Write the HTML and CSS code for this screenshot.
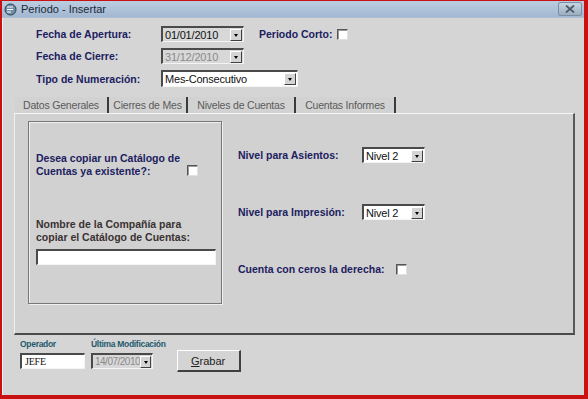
FILE: index.html
```html
<!DOCTYPE html>
<html lang="es">
<head>
<meta charset="utf-8">
<title>Periodo - Insertar</title>
<link rel="stylesheet" href="styles.css">
</head>
<body>
<div class="window">
  <div class="titlebar">
    <span class="app-icon">
      <svg width="13" height="13" viewBox="0 0 13 13">
        <circle cx="6.5" cy="6.5" r="5.5" fill="#6f8fa8" stroke="#2a3a4a" stroke-width="1"/>
        <path d="M3 4 h6 M3 6.5 h6 M3 9 h4" stroke="#fff" stroke-width="1.2"/>
      </svg>
    </span>
    <span class="title">Periodo - Insertar</span>
    <span class="close-btn">
      <svg width="10" height="8" viewBox="0 0 10 8"><path d="M1 0.5 L9 7.5 M9 0.5 L1 7.5" stroke="#4a5a6a" stroke-width="1.8"/></svg>
    </span>
  </div>

  <div class="body">
    <div class="top-form">
      <label class="lbl">Fecha de Apertura:</label>
      <div class="row-controls">
        <div class="field date"><span class="val">01/01/2010</span><span class="dd"></span></div>
        <label class="lbl corto">Periodo Corto:</label>
        <span class="check"></span>
      </div>
      <label class="lbl">Fecha de Cierre:</label>
      <div class="row-controls">
        <div class="field date disabled"><span class="val">31/12/2010</span><span class="dd"></span></div>
      </div>
      <label class="lbl">Tipo de Numeración:</label>
      <div class="row-controls">
        <div class="field combo white"><span class="val">Mes-Consecutivo</span><span class="dd"></span></div>
      </div>
    </div>

    <div class="tabs">
      <span class="tab t1">Datos Generales</span>
      <span class="tab t2">Cierres de Mes</span>
      <span class="tab t3">Niveles de Cuentas</span>
      <span class="tab t4">Cuentas Informes</span>
    </div>

    <div class="panel">
      <div class="group">
        <div class="copy-row">
          <span class="lbl multi copy-lbl">Desea copiar un Catálogo de<br>Cuentas ya existente?:</span>
          <span class="check"></span>
        </div>
        <div class="lbl multi dark">Nombre de la Compañía para<br>copiar el Catálogo de Cuentas:</div>
        <div class="field text white"></div>
      </div>
      <div class="right-col">
        <div class="r-row">
          <span class="lbl r-lbl">Nivel para Asientos:</span>
          <div class="field nivel white"><span class="val">Nivel 2</span><span class="dd"></span></div>
        </div>
        <div class="r-row">
          <span class="lbl r-lbl">Nivel para Impresión:</span>
          <div class="field nivel white"><span class="val">Nivel 2</span><span class="dd"></span></div>
        </div>
        <div class="r-row">
          <span class="lbl">Cuenta con ceros la derecha:</span>
          <span class="check ceros"></span>
        </div>
      </div>
    </div>

    <div class="footer">
      <div class="f-col">
        <span class="small-lbl">Operador</span>
        <div class="field oper white"><span class="val serif">JEFE</span></div>
      </div>
      <div class="f-col">
        <span class="small-lbl">Última Modificación</span>
        <div class="field umod disabled"><span class="val">14/07/2010</span><span class="dd"></span></div>
      </div>
      <button class="btn"><u>G</u>rabar</button>
    </div>
  </div>
</div>
</body>
</html>
```

FILE: styles.css
```css
html, body {
  margin: 0;
  padding: 0;
  width: 588px;
  height: 399px;
  overflow: hidden;
  background: #c41414;
}

.window {
  box-sizing: border-box;
  width: 588px;
  height: 399px;
  border-style: solid;
  border-color: #c81212;
  border-width: 1px 4px 4px 2px;
  background: #d5d5d5;
  display: flex;
  flex-direction: column;
  font-family: "Liberation Sans", Arial, sans-serif;
}

.titlebar {
  height: 16px;
  display: flex;
  align-items: center;
  background: linear-gradient(to bottom, #bccde0, #a2b8d2);
  border-bottom: 1px solid #b0c0d0;
  padding-left: 2px;
}

.app-icon {
  width: 14px;
  height: 14px;
  display: flex;
  align-items: center;
}

.title {
  margin-left: 3px;
  font-size: 11px;
  color: #1c2836;
  flex: 1;
}

.close-btn {
  width: 22px;
  height: 12px;
  margin-right: 2px;
  border: 1px solid #7a8ea4;
  border-radius: 2px;
  background: linear-gradient(to bottom, #c8d4e0, #9cadc0);
  display: flex;
  align-items: center;
  justify-content: center;
}

.body {
  flex: 1;
  display: flex;
  flex-direction: column;
  padding: 8px 4px 0 12px;
  box-shadow: inset 1px 0 0 #f2f2f2;
}

.lbl {
  font-size: 10.5px;
  font-weight: bold;
  color: #202060;
  white-space: nowrap;
}

.top-form {
  display: grid;
  grid-template-columns: 125px auto;
  grid-template-rows: 16px 16px 17px;
  row-gap: 6px;
  align-items: center;
  padding-left: 22px;
}

.row-controls {
  display: flex;
  align-items: center;
}

.field {
  box-sizing: border-box;
  height: 16px;
  background: #d8d8d8;
  border-style: solid;
  border-width: 2px 1px 1px 2px;
  border-color: #4a4a4a #f4f4f4 #f4f4f4 #4a4a4a;
  display: flex;
  align-items: center;
  justify-content: space-between;
  font-size: 11px;
  color: #111;
}

.field.white { background: #ffffff; }
.field.disabled { color: #8a8a8a; }

.val {
  padding-left: 2px;
  line-height: 12px;
  letter-spacing: -0.2px;
}

.val.serif {
  font-family: "Liberation Serif", serif;
  font-size: 10px;
  padding-left: 3px;
}

.dd {
  box-sizing: border-box;
  width: 12px;
  height: 12px;
  margin-right: 1px;
  background: #d4d4d4;
  border-style: solid;
  border-width: 1px;
  border-color: #ffffff #404040 #404040 #ffffff;
  position: relative;
}

.dd::after {
  content: "";
  position: absolute;
  left: 3px;
  top: 4px;
  border-left: 2.5px solid transparent;
  border-right: 2.5px solid transparent;
  border-top: 3px solid #000;
}

.date { width: 83px; }
.combo { width: 137px; height: 17px; }

.corto { margin-left: 15px; }

.check {
  box-sizing: border-box;
  width: 11px;
  height: 11px;
  background: #fff;
  border-style: solid;
  border-width: 1px;
  border-color: #555 #e0e0e0 #e0e0e0 #555;
  box-shadow: inset 1px 1px 0 #999;
  margin-left: 4px;
}

.tabs {
  display: flex;
  margin-top: 10px;
  height: 16px;
  padding-left: 1px;
}

.tab {
  font-size: 10.5px;
  color: #5a5a5a;
  line-height: 16px;
  text-align: center;
  border-right: 2px solid #3a3a3a;
  box-sizing: border-box;
  background: #d2d2d2;
  letter-spacing: -0.2px;
}

.t1 { width: 94px; }
.t2 { width: 79px; }
.t3 { width: 108px; }
.t4 { width: 100px; }

.panel {
  box-sizing: border-box;
  height: 222px;
  margin-right: 5px;
  border-style: solid;
  border-width: 1px 2px 2px 1px;
  border-color: #f6f6f6 #5a5a5a #4a4a4a #f0f0f0;
  display: flex;
  padding: 7px 0 0 13px;
  background: #d1d1d1;
}

.group {
  box-sizing: border-box;
  width: 194px;
  height: 183px;
  border: 1px solid #777;
  box-shadow: inset 1px 1px 0 #efefef, 1px 1px 0 #efefef;
  padding: 30px 0 0 7px;
  display: flex;
  flex-direction: column;
}

.multi { line-height: 13px; }

.copy-row {
  display: flex;
  align-items: flex-end;
}

.copy-lbl { width: 151px; }

.copy-row .check {
  margin-left: 0;
  margin-bottom: 2px;
}

.dark { color: #3a3232; margin-top: 40px; }

.text {
  width: 180px;
  height: 16px;
  margin-top: 5px;
}

.right-col {
  display: flex;
  flex-direction: column;
  padding: 26px 0 0 16px;
  gap: 41px;
}

.r-row {
  display: flex;
  align-items: center;
  height: 16px;
}

.r-lbl { width: 124px; }

.nivel { width: 63px; }

.ceros { margin-left: 12px; }

.footer {
  display: flex;
  align-items: flex-start;
  padding: 4px 0 0 6px;
}

.f-col {
  display: flex;
  flex-direction: column;
  margin-right: 6px;
}

.small-lbl {
  font-size: 8.5px;
  color: #1e5a6e;
  font-weight: bold;
  letter-spacing: -0.3px;
  height: 10px;
  line-height: 10px;
  margin-bottom: 4px;
  white-space: nowrap;
}

.oper { width: 65px; }
.umod { width: 62px; }
.umod .val { font-size: 10px; letter-spacing: -0.5px; }

.btn {
  margin-left: 5px;
  margin-top: 11px;
  width: 64px;
  height: 22px;
  font-family: "Liberation Sans", Arial, sans-serif;
  font-size: 11px;
  color: #222;
  background: #d4d4d4;
  border-style: solid;
  border-width: 1px 2px 2px 1px;
  border-color: #ffffff #404040 #404040 #ffffff;
  padding: 0;
}
```
